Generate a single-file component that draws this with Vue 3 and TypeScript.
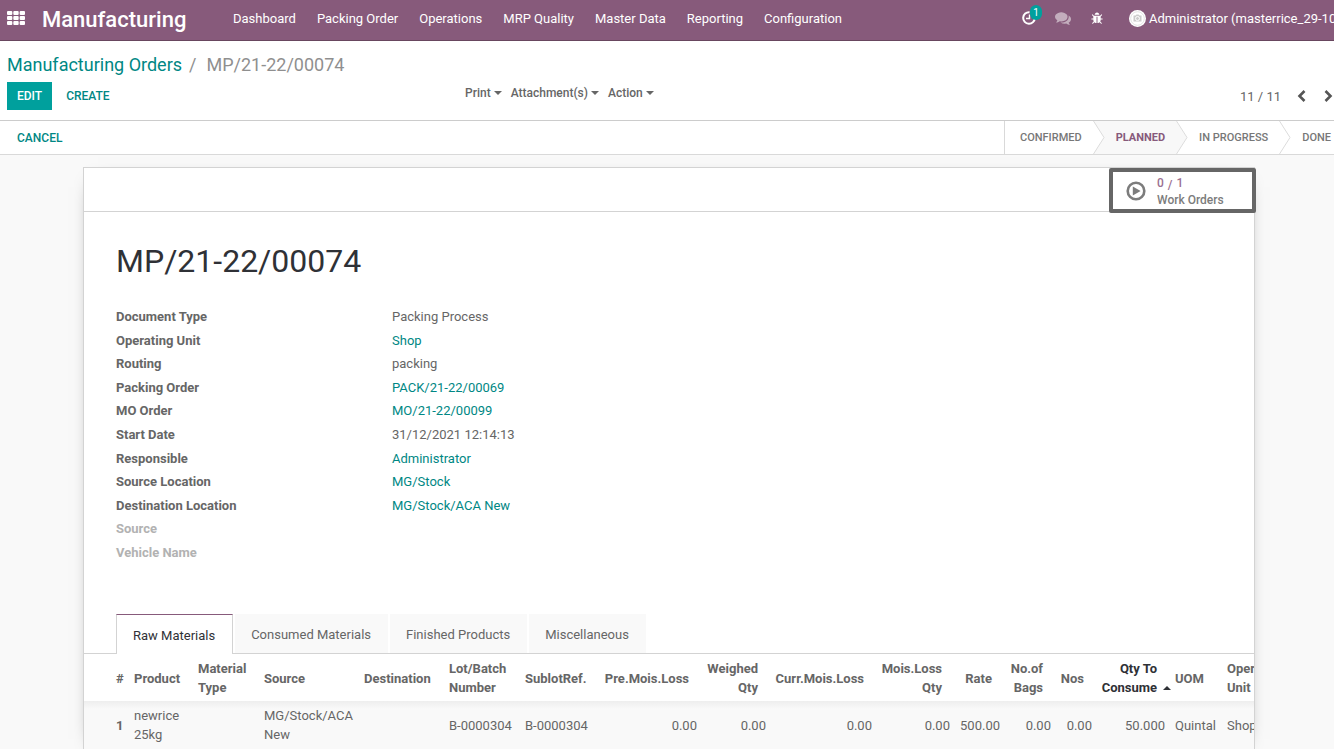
<script setup lang="ts">
import { ref } from 'vue'

interface Field { label: string; value?: string; link?: boolean }
interface Column { label: string; width: number; numeric?: boolean; sorted?: boolean }

const menus: string[] = ['Dashboard', 'Packing Order', 'Operations', 'MRP Quality', 'Master Data', 'Reporting', 'Configuration']
const actions: string[] = ['Print', 'Attachment(s)', 'Action']
const stages: string[] = ['Confirmed', 'Planned', 'In Progress', 'Done']
const currentStage = 'Planned'

const fields: Field[] = [
  { label: 'Document Type', value: 'Packing Process' },
  { label: 'Operating Unit', value: 'Shop', link: true },
  { label: 'Routing', value: 'packing' },
  { label: 'Packing Order', value: 'PACK/21-22/00069', link: true },
  { label: 'MO Order', value: 'MO/21-22/00099', link: true },
  { label: 'Start Date', value: '31/12/2021 12:14:13' },
  { label: 'Responsible', value: 'Administrator', link: true },
  { label: 'Source Location', value: 'MG/Stock', link: true },
  { label: 'Destination Location', value: 'MG/Stock/ACA New', link: true },
  { label: 'Source' },
  { label: 'Vehicle Name' },
]

const tabs: string[] = ['Raw Materials', 'Consumed Materials', 'Finished Products', 'Miscellaneous']
const activeTab = ref(tabs[0])

const columns: Column[] = [
  { label: '#', width: 45 },
  { label: 'Product', width: 64 },
  { label: 'Material Type', width: 66 },
  { label: 'Source', width: 100 },
  { label: 'Destination', width: 85 },
  { label: 'Lot/Batch Number', width: 76 },
  { label: 'SublotRef.', width: 76 },
  { label: 'Pre.Mois.Loss', width: 106, numeric: true },
  { label: 'Weighed Qty', width: 69, numeric: true },
  { label: 'Curr.Mois.Loss', width: 106, numeric: true },
  { label: 'Mois.Loss Qty', width: 78, numeric: true },
  { label: 'Rate', width: 50, numeric: true },
  { label: 'No.of Bags', width: 51, numeric: true },
  { label: 'Nos', width: 41, numeric: true },
  { label: 'Qty To Consume', width: 73, numeric: true, sorted: true },
  { label: 'UOM', width: 52 },
  { label: 'Operating Unit', width: 80 },
]

const rows: string[][] = [
  ['1', 'newrice 25kg', '', 'MG/Stock/ACA New', '', 'B-0000304', 'B-0000304', '0.00', '0.00', '0.00', '0.00', '500.00', '0.00', '0.00', '50.000', 'Quintal', 'Shop'],
]
</script>

<template>
  <div class="page">
    <header class="navbar">
      <button class="icon-btn apps" type="button" aria-label="Applications">
        <svg width="18" height="14" viewBox="0 0 54 42" fill="#fff">
          <template v-for="y in [0, 15, 30]" :key="y">
            <rect v-for="x in [0, 19, 38]" :key="x" :x="x" :y="y" width="16" height="12" rx="3" />
          </template>
        </svg>
      </button>
      <a class="brand" href="#">Manufacturing</a>
      <nav class="menu">
        <a v-for="m in menus" :key="m" href="#">{{ m }}</a>
      </nav>
      <div class="systray">
        <button class="icon-btn activity" type="button" aria-label="Activities">
          <svg width="14" height="14" viewBox="0 0 14 14" fill="none" stroke="#fff" stroke-width="2">
            <path d="M7.500 1.200A5.800 5.800 0 1 0 12.800 7" />
            <path d="M7.500 3.500V7.500H4" stroke-width="1.400" />
          </svg>
          <span class="badge">1</span>
        </button>
        <button class="icon-btn chat" type="button" aria-label="Conversations">
          <svg width="16" height="16" viewBox="0 0 1792 1792" fill="#fff">
            <path d="M1408 768q0 139-94 257t-256.500 186.500-353.500 68.500q-86 0-176-16-124 88-278 128-36 9-86 16h-3q-11 0-20.500-8t-11.500-21q-1-3-1-6.500t.5-6.500 2-6l2.500-5 3.500-5.500 4-5 4.500-5 4-4.500q5-6 23-25t26-29.500 22.500-29 25-38.500 20.500-44q-124-72-195-177t-71-224q0-139 94-257t256.500-186.500 353.500-68.500 353.500 68.500 256.500 186.500 94 257zm384 256q0 120-71 224.500t-195 176.500q10 24 20.500 44t25 38.500 22.500 29 26 29.500 23 25q1 1 4 4.500t4.500 5 4 5 3.500 5.500l2.500 5 2 6 .5 6.500-1 6.500q-3 14-13 22t-22 7q-50-7-86-16-154-40-278-128-90 16-176 16-271 0-472-132 58 4 88 4 161 0 309-45t264-129q125-92 192-212t67-254q0-77-23-152 129 71 204 178t75 230z" />
          </svg>
        </button>
        <button class="icon-btn bug" type="button" aria-label="Debug">
          <svg width="12" height="13" viewBox="0 0 1664 1792" fill="#fff">
            <path d="M1632 960q0 26-19 45t-45 19h-224q0 171-67 290l208 209q19 19 19 45t-19 45q-18 19-45 19t-45-19l-198-197q-5 5-15 13t-42 28.500-65 36.500-82 29-97 13v-896h-128v896q-51 0-101.500-13.500t-87-33-66-39-43.500-32.500l-15-14-183 207q-20 21-48 21-24 0-43-16-19-18-20.500-44.500t15.500-46.500l202-227q-58-114-58-274h-224q-26 0-45-19t-19-45 19-45 45-19h224v-294l-173-173q-19-19-19-45t19-45 45-19 45 19l173 173h844l173-173q19-19 45-19t45 19 19 45-19 45l-173 173v294h224q26 0 45 19t19 45zm-480-576h-640q0-133 93.500-226.500t226.500-93.500 226.500 93.500 93.500 226.500z" />
          </svg>
        </button>
        <button class="user" type="button">
          <svg width="17" height="17" viewBox="0 0 17 17">
            <circle cx="8.500" cy="8.500" r="8.500" fill="#fff" />
            <circle cx="8.500" cy="8.500" r="6.800" fill="none" stroke="#e3e3e3" />
            <path d="M4.500 5.500h2l1-1h2l1 1h2v6h-8z" fill="#ccc" />
            <circle cx="8.500" cy="8.500" r="2" fill="#ccc" stroke="#fff" />
          </svg>
          <span>Administrator (masterrice_29-10</span>
        </button>
      </div>
    </header>

    <section class="control">
      <ol class="crumbs">
        <li><a href="#">Manufacturing Orders</a></li>
        <li class="sep">/</li>
        <li>MP/21-22/00074</li>
      </ol>
      <div class="control-row">
        <div class="buttons">
          <button class="btn primary" type="button">Edit</button>
          <button class="btn" type="button">Create</button>
        </div>
        <div class="actions">
          <button v-for="a in actions" :key="a" type="button">{{ a }}<i class="caret"></i></button>
        </div>
        <div class="pager">
          <span>11 / 11</span>
          <button class="icon-btn" type="button" aria-label="Previous">
            <svg width="9" height="12" viewBox="0 0 9 12" fill="none" stroke="#555" stroke-width="2.600"><path d="M7.500 1L2.500 6l5 5" /></svg>
          </button>
          <button class="icon-btn" type="button" aria-label="Next">
            <svg width="9" height="12" viewBox="0 0 9 12" fill="none" stroke="#555" stroke-width="2.600"><path d="M1.500 1l5 5-5 5" /></svg>
          </button>
        </div>
      </div>
    </section>

    <section class="statusbar">
      <button class="btn" type="button">Cancel</button>
      <div class="stages">
        <button v-for="(s, i) in stages" :key="s" type="button" class="stage" :class="{ current: s === currentStage }">
          {{ s }}
          <svg v-if="i < stages.length - 1" class="arrow" width="12" height="33" viewBox="0 0 12 33">
            <path d="M0 0L11 16.500 0 33z" :fill="s === currentStage ? '#f8f8f8' : '#fff'" />
            <path d="M0.500 0L11 16.500 0.500 33" fill="none" stroke="#dcdcdc" />
          </svg>
        </button>
      </div>
    </section>

    <main class="sheet">
      <div class="button-box">
        <button class="stat" type="button">
          <svg width="20" height="20" viewBox="0 0 20 20">
            <circle cx="10" cy="10" r="8.300" fill="none" stroke="#7c7c7c" stroke-width="2.600" />
            <path d="M6.800 5.500v9l7.800-4.500z" fill="#7c7c7c" />
          </svg>
          <span class="stat-text">
            <span class="stat-value"><span>0</span><span class="slash">/</span><span>1</span></span>
            <span>Work Orders</span>
          </span>
        </button>
      </div>

      <div class="body">
        <h1>MP/21-22/00074</h1>
        <dl class="fields">
          <template v-for="f in fields" :key="f.label">
            <dt :class="{ empty: !f.value }">{{ f.label }}</dt>
            <dd><a v-if="f.link" href="#">{{ f.value }}</a><template v-else>{{ f.value }}</template></dd>
          </template>
        </dl>
      </div>

      <div class="tabs" role="tablist">
        <button v-for="t in tabs" :key="t" type="button" role="tab" :aria-selected="t === activeTab" :class="{ active: t === activeTab }" @click="activeTab = t">{{ t }}</button>
      </div>

      <div class="table-wrap">
        <table>
          <colgroup>
            <col v-for="c in columns" :key="c.label" :style="{ width: c.width + 'px' }" />
          </colgroup>
          <thead>
            <tr>
              <th v-for="c in columns" :key="c.label" scope="col" :class="{ numeric: c.numeric, sorted: c.sorted }">{{ c.label }}</th>
            </tr>
          </thead>
          <tbody>
            <tr v-for="r in rows" :key="r[0]">
              <td v-for="(v, i) in r" :key="i" :class="{ numeric: columns[i].numeric }">{{ v }}</td>
            </tr>
          </tbody>
        </table>
      </div>
    </main>
  </div>
</template>

<style>
body { margin: 0; background: #f9f9f9; }
</style>

<style scoped>
.page {
  box-sizing: border-box;
  display: flex;
  flex-direction: column;
  overflow: hidden;
  height: 100vh;
  font: 13px/19px Roboto, "Liberation Sans", sans-serif;
  color: #666;
  background: #f9f9f9;
}
button { font: inherit; color: inherit; border: 0; padding: 0; background: none; cursor: pointer; }
a { color: #008784; text-decoration: none; }
svg { display: block; flex: none; }
.icon-btn { display: flex; align-items: center; }

.navbar {
  display: flex;
  align-items: center;
  flex: none;
  height: 40px;
  padding-left: 7px;
  background: #875a7b;
  border-bottom: 1px solid #68465f;
  color: #fff;
}
.navbar a { color: #fff; white-space: nowrap; }
.apps { padding-bottom: 4px; }
.brand { margin-left: 17px; width: 191px; font-size: 22px; font-weight: 500; line-height: 38px; }
.menu { display: flex; gap: 21px; padding-bottom: 3px; }
.systray { display: flex; align-items: center; margin-left: auto; padding-bottom: 4px; }
.activity { position: relative; }
.badge {
  position: absolute; left: 8px; top: -6px; width: 12px; height: 15px;
  border-radius: 7px; background: #00a09d; font-size: 10px; line-height: 15px; text-align: center;
}
.chat { margin-left: 19px; opacity: .5; }
.bug { margin-left: 20px; }
.user { display: flex; align-items: center; gap: 3px; margin-left: 26px; width: 205px; overflow: hidden; white-space: nowrap; }

.control { flex: none; background: #fff; border-bottom: 1px solid #ccc; padding: 12px 1px 10px 7px; }
.crumbs { display: flex; gap: 7px; margin: 0; padding: 0; list-style: none; font-size: 18px; line-height: 24px; color: #8f8f8f; }
.crumbs .sep { margin-right: 3px; }
.control-row { display: grid; grid-template-columns: 458px 1fr auto; align-items: center; margin-top: 5px; }
.buttons { display: flex; gap: 4px; }
.btn { padding: 0 10px; height: 28px; font-size: 12px; font-weight: 500; text-transform: uppercase; color: #008784; }
.primary { min-width: 45px; background: #00a09d; color: #fff; }
.actions { display: flex; gap: 9px; font-size: 12px; font-weight: 500; padding-bottom: 6px; }
.caret { display: inline-block; margin-left: 3px; vertical-align: 2px; border: 4px solid transparent; border-top-color: currentColor; border-bottom: 0; }
.pager { display: flex; align-items: center; }
.pager span { margin-right: 16px; }
.pager .icon-btn + .icon-btn { margin-left: 18px; }

.statusbar { flex: none; display: flex; justify-content: space-between; align-items: center; height: 33px; padding-left: 7px; background: #fff; border-bottom: 1px solid #d9d9d9; }
.statusbar .btn { padding-top: 2px; }
.stages { display: flex; height: 33px; border-left: 1px solid #d9d9d9; }
.stage { position: relative; padding: 0 11px 0 23px; font-size: 11px; font-weight: 500; text-transform: uppercase; color: #777; }
.stage:first-child { padding-left: 15px; }
.stage:last-child { padding-right: 3px; }
.stage.current { background: #f8f8f8; color: #875a7b; font-weight: 700; }
.arrow { position: absolute; left: 100%; top: 0; z-index: 1; }

.sheet {
  flex: 1 0 auto;
  margin: 12px 79px 0 83px;
  min-width: 0;
  background: #fff;
  border: 1px solid #d3d3d3;
  border-bottom: 0;
  box-shadow: 0 5px 20px -15px #000;
}
.button-box { display: flex; justify-content: flex-end; height: 43px; border-bottom: 1px solid #d3d3d3; }
.stat {
  display: flex; align-items: center; gap: 11px; box-sizing: border-box;
  width: 147px; height: 45px; margin-right: -2px; padding-left: 13px;
  border: 4px solid #666; border-radius: 2px; background: #fff;
  font-size: 12px; font-weight: 500; line-height: 17px; text-align: left; color: #7c7c7c;
}
.stat-text, .stat-value { display: flex; }
.stat-text { flex-direction: column; padding-top: 2px; }
.stat-value { gap: 4px; height: 17px; color: #9b7091; }
.slash { padding-top: 2px; }

.body { padding: 29px 32px 0; }
h1 { margin: 0; font-size: 32px; font-weight: 400; line-height: 40px; color: #2f3136; }
.fields {
  display: grid; grid-template-columns: 276px 1fr; grid-template-rows: repeat(11, 1fr);
  height: 259px; margin: 24px 0 50px; align-items: center;
}
dt { font-weight: 700; }
dt.empty { color: #b2b2b2; }
dd { margin: 0; }

.tabs { display: flex; gap: 2px; padding-left: 32px; border-bottom: 1px solid #d3d3d3; }
.tabs button { height: 39px; padding: 2px 17px 0 16px; background: #f9f9f9; }
.tabs .active {
  box-sizing: border-box; height: 40px; margin-bottom: -1px; background: #fff; color: #2f3136;
  border: solid #d3d3d3; border-width: 1px 1px 0; border-top-color: #875a7b;
}

.table-wrap { overflow: hidden; }
table { width: 100%; min-width: 1218px; table-layout: fixed; border-collapse: collapse; }
th, td { padding: 5px; text-align: left; vertical-align: middle; }
th { padding-top: 5px; padding-bottom: 4px; font-weight: 700; }
th:first-child, td:first-child { padding-left: 32px; font-weight: 700; }
.numeric { text-align: right; }
th.numeric { padding-right: 13px; padding-left: 0; }
th.sorted { position: relative; color: #2f3136; }
th.sorted::after { content: ""; position: absolute; right: -1px; bottom: 11px; border: 4px solid transparent; border-bottom-color: currentColor; border-top: 0; }
tbody tr { background: linear-gradient(#eee, #f9f9f9 8px); }
</style>
